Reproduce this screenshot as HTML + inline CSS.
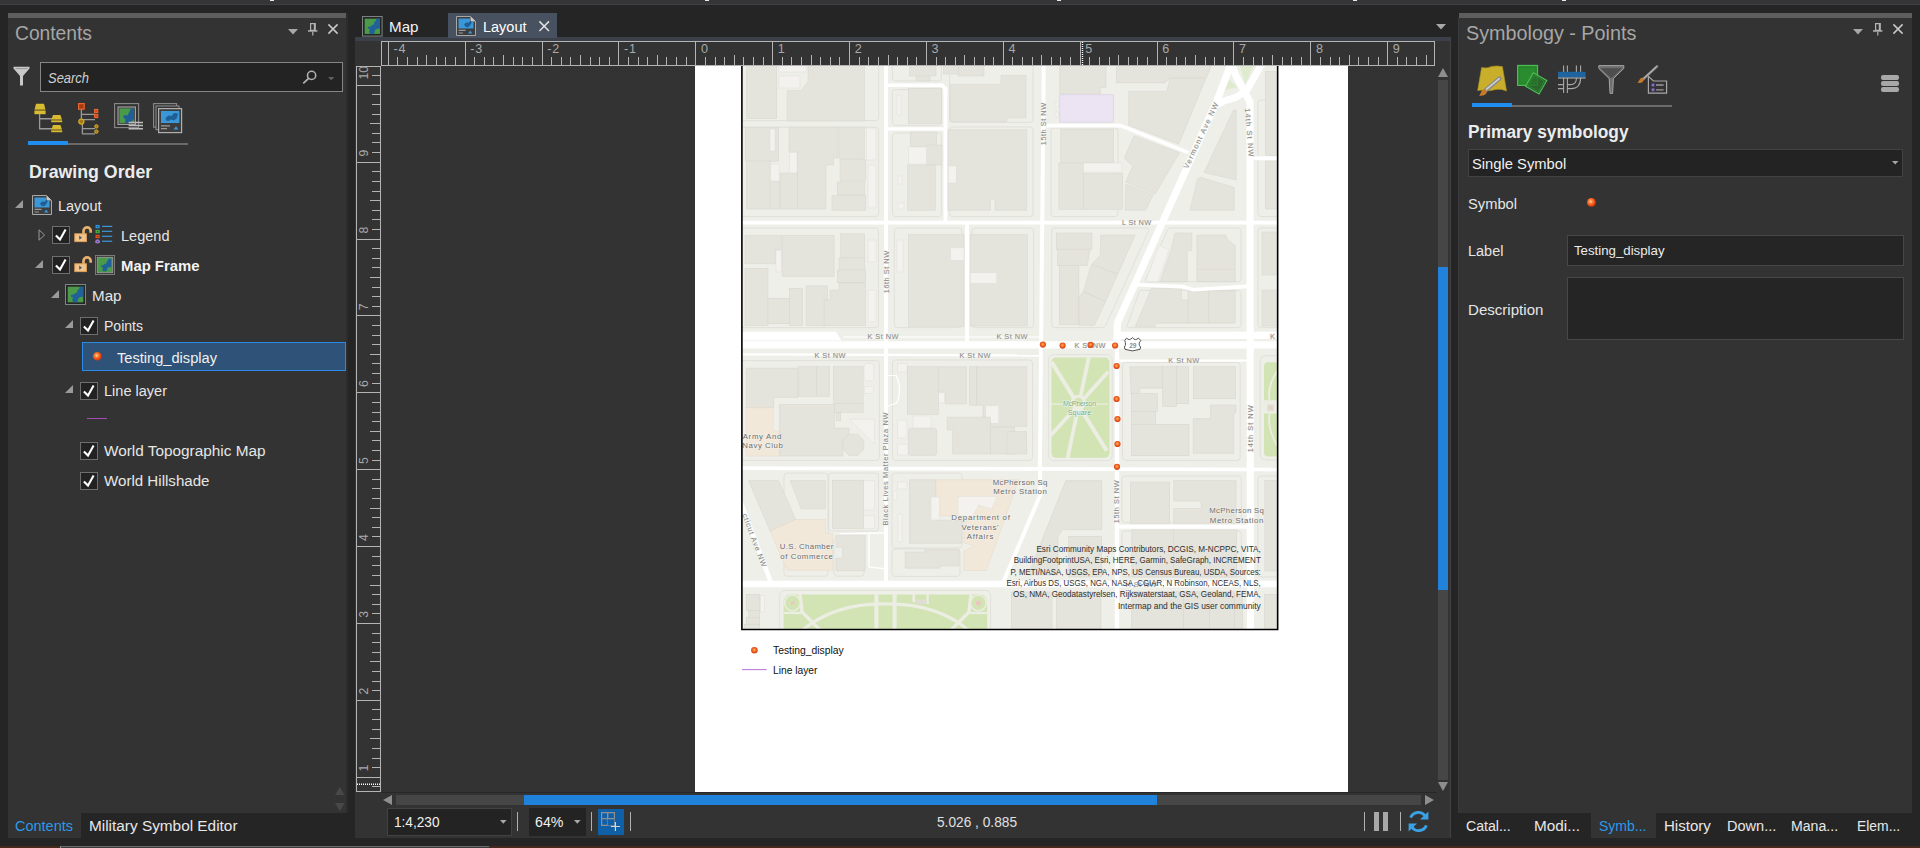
<!DOCTYPE html>
<html lang="en"><head><meta charset="utf-8"><title>ArcGIS Pro - Layout</title>
<style>
*{box-sizing:border-box;margin:0;padding:0}
html,body{width:1920px;height:848px;overflow:hidden;background:#252525}
body{position:relative;font-family:"Liberation Sans",sans-serif;color:#e4e4e4}
.a{position:absolute}
.t{position:absolute;white-space:nowrap;transform-origin:0 50%;line-height:normal}
svg{position:absolute;overflow:visible}
svg text{font-family:"Liberation Sans",sans-serif}
.cb{position:absolute;width:18px;height:18px;background:#222;border:1px solid #6e6e6e}

</style></head>
<body>

<!-- p_frame -->
<div class="a" style="left:0px;top:0px;width:1920px;height:4px;background:#353535;"></div>
<div class="a" style="left:0px;top:4px;width:1920px;height:1px;background:#3f3f45;"></div>
<div class="a" style="left:270px;top:0px;width:3.6px;height:1.2px;background:#e8e8e8;"></div>
<div class="a" style="left:705px;top:0px;width:3.6px;height:1.2px;background:#e8e8e8;"></div>
<div class="a" style="left:1057px;top:0px;width:3.6px;height:1.2px;background:#e8e8e8;"></div>
<div class="a" style="left:1353px;top:0px;width:3.6px;height:1.2px;background:#e8e8e8;"></div>
<div class="a" style="left:1562px;top:0px;width:3.6px;height:1.2px;background:#e8e8e8;"></div>
<div class="a" style="left:0px;top:846px;width:1920px;height:2px;background:#45291f;"></div>
<div class="a" style="left:60px;top:846px;width:429px;height:1px;background:#6a6a6a;"></div>
<div class="a" style="left:60px;top:847px;width:429px;height:1px;background:#3c3c3c;"></div>
<div class="a" style="left:60px;top:846px;width:1px;height:2px;background:#8a8a8a;"></div>
<div class="a" style="left:8px;top:13px;width:338px;height:800px;background:#333;"></div>
<div class="a" style="left:8px;top:13px;width:338px;height:5px;background:#5d5d5d;"></div>
<div class="a" style="left:346px;top:13px;width:2px;height:800px;background:#2c2c2c;"></div>
<div class="a" style="left:8px;top:813px;width:73px;height:25px;background:#333;"></div>
<div class="a" style="left:355px;top:37px;width:1096px;height:801px;background:#333;"></div>
<div class="a" style="left:355px;top:37px;width:1096px;height:4px;background:#3c4048;"></div>
<div class="a" style="left:1450px;top:41px;width:1px;height:797px;background:#414146;"></div>
<div class="a" style="left:1458px;top:18px;width:1px;height:795px;background:#3a3a3e;"></div>
<div class="a" style="left:448px;top:13px;width:109px;height:25px;background:#48515f;"></div>
<div class="a" style="left:1459px;top:13px;width:453px;height:800px;background:#333;"></div>
<div class="a" style="left:1459px;top:13px;width:453px;height:5px;background:#5d5d5d;"></div>
<div class="a" style="left:1591px;top:813px;width:65px;height:25px;background:#333;"></div>
<!-- p_left -->
<span class="t" style="left:14.50px;top:22.00px;font-size:20.4px;color:#a6a6a6;transform:scaleX(0.9430);">Contents</span>
<svg style="left:288px;top:29px" width="10" height="5.4" viewBox="0 0 10 5.4"><path d="M0 0H10L5.0 5.4Z" fill="#a8a8a8"/></svg>
<svg style="left:308px;top:22.6px" width="10" height="13" viewBox="0 0 10 13"><path d="M2.6 0.6H7.2V7.4H2.6Z" fill="none" stroke="#b4b4b4" stroke-width="1.2"/><path d="M5.8 0.6H7.2V7.4H5.8Z" fill="#b4b4b4"/><path d="M0 7.2H9.4V8.7H0Z" fill="#b4b4b4"/><path d="M4.2 8.7H5.4V12.6H4.2Z" fill="#b4b4b4"/></svg>
<svg style="left:328px;top:24px" width="10" height="10" viewBox="0 0 10 10"><path d="M0.4 0.4L9.6 9.6M9.6 0.4L0.4 9.6" stroke="#c8c8c8" stroke-width="1.5" fill="none"/></svg>
<svg style="left:13px;top:66px" width="17" height="21" viewBox="0 0 17 21"><path d="M0.5 0.8H16.5V2.6L10 10V19.5H7V10L0.5 2.6Z" fill="#c9c9c9"/><path d="M2.5 2.6H14.5" stroke="#8a8a8a" stroke-width="0.8"/></svg>
<div class="a" style="left:40px;top:62px;width:303px;height:30px;background:#232323;border:1px solid #868686;"></div>
<span class="t" style="left:47.50px;top:69.50px;font-size:14.6px;color:#d0d0d0;font-style:italic;transform:scaleX(0.8863);">Search</span>
<svg style="left:303px;top:70px" width="14" height="14" viewBox="0 0 14 14"><circle cx="8.6" cy="5.4" r="4.1" fill="none" stroke="#b0b0b0" stroke-width="1.6"/><path d="M5.6 8.4L0.8 12.8" stroke="#b0b0b0" stroke-width="1.8" stroke-linecap="round"/></svg>
<svg style="left:328px;top:77px" width="6.4" height="3.6" viewBox="0 0 6.4 3.6"><path d="M0 0H6.4L3.2 3.6Z" fill="#5e5e5e"/></svg>
<svg style="left:34px;top:103px" width="29" height="30" viewBox="0 0 29 30"><path d="M5.6 10V25.75H18M5.6 15.75H18" fill="none" stroke="#9a9a9a" stroke-width="1.3"/><path d="M2 0.8H10L11.4 6.4H0.6Z" fill="#d8bb30"/><path d="M0.4 7.6H11.6V11.2H0.4Z" fill="#d8bb30"/><path d="M0.6 6.9H11.4" stroke="#b89a18" stroke-width="0.9"/><path d="M19 12H26.4L28 16.6H17.4Z" fill="#d8bb30"/><path d="M17.2 17.4H28.2V19.2H17.2Z" fill="#d8bb30"/><path d="M17.4 17H28" stroke="#b89a18" stroke-width="0.8"/><path d="M19 22H26.4L28 26.6H17.4Z" fill="#d8bb30"/><path d="M17.2 27.4H28.2V29.2H17.2Z" fill="#d8bb30"/><path d="M17.4 27H28" stroke="#b89a18" stroke-width="0.8"/></svg>
<svg style="left:78px;top:103px" width="21" height="31" viewBox="0 0 21 31"><path d="M3.4 6V19M3.4 12H17M3.4 17.4H17M4.4 21V33M4.4 27H17M4.4 32.6H17" transform="scale(1,0.95)" fill="none" stroke="#9a9a9a" stroke-width="1.3"/><rect x="0.6" y="0.6" width="5.6" height="5.6" fill="#a83a10" stroke="#f06a30" stroke-width="1.1"/><rect x="16.6" y="6.4" width="3.2" height="3.2" fill="#d84a18" stroke="#f06a30" stroke-width="1"/><rect x="16.6" y="11.4" width="3.2" height="3.2" fill="#d84a18" stroke="#f06a30" stroke-width="1"/><circle cx="3.4" cy="18.6" r="2.6" fill="#a87818" stroke="#d8b020" stroke-width="1.1"/><circle cx="18.4" cy="23.4" r="1.7" fill="#a87818" stroke="#d8b020" stroke-width="1"/><circle cx="18.4" cy="28.6" r="1.7" fill="#a87818" stroke="#d8b020" stroke-width="1"/></svg>
<svg style="left:114px;top:103px" width="30" height="29" viewBox="0 0 30 29"><rect x="0.6" y="0.6" width="24" height="24" fill="none" stroke="#8a8a8a" stroke-width="1.1"/><rect x="4" y="4" width="17.4" height="17.4" fill="#3d3d3d" stroke="#a8a8a8" stroke-width="1.1"/><rect x="5.4" y="5.4" width="14.6" height="14.6" fill="#4a9a4a"/><path d="M17 5.4H20V16L16 20H11L11.5 16.5L9 14L10.5 12L13.5 12.5L15 9.5Z" fill="#1f5f96"/><path d="M14.6 19.4H29M14.6 22.6H29M14.6 25.8H29" stroke="#bdbdbd" stroke-width="1.5"/><path d="M14.6 18H29V27H14.6Z" fill="#333" opacity="0"/></svg>
<svg style="left:153px;top:103px" width="30" height="31" viewBox="0 0 30 31"><rect x="0.6" y="0.6" width="23" height="23.6" fill="#333" stroke="#8a8a8a" stroke-width="1.1"/><rect x="3" y="3" width="23" height="23.6" fill="#333" stroke="#8a8a8a" stroke-width="1.1"/><rect x="5.6" y="5.6" width="23" height="24" fill="#3d3d3d" stroke="#b0b0b0" stroke-width="1.2"/><rect x="8" y="8" width="18.4" height="12" fill="#3a98d8"/><path d="M12.5 15L15.5 12.5L18.5 13L21 10L25 10.5L24 15L21 17.4L18 16.4L15.5 18L13 17.4Z" fill="#1f5f96"/><path d="M8 22.8H17M8 25.6H14" stroke="#9a9a9a" stroke-width="1.2"/><path d="M20.6 26.6L23 23.2L25.4 26.6Z" fill="#3a98d8"/></svg>
<div class="a" style="left:28px;top:141px;width:40px;height:4px;background:#1f8ef0;"></div>
<div class="a" style="left:68px;top:143px;width:120px;height:2px;background:#6a6a6a;"></div>
<span class="t" style="left:28.80px;top:161.80px;font-size:17.9px;color:#ececec;font-weight:bold;transform:scaleX(0.9909);">Drawing Order</span>
<svg style="left:15px;top:200px" width="8" height="8" viewBox="0 0 8 8"><path d="M8 0V8H0Z" fill="#9a9a9a"/></svg>
<svg style="left:32px;top:195px" width="20" height="20" viewBox="0 0 20 20"><path d="M0.5 0.5H14.5L19.5 5.5V19.5H0.5Z" fill="#3d3d3d" stroke="#a8a8a8" stroke-width="1"/><path d="M14.5 0.5V5.5H19.5Z" fill="#c8c8c8"/><path d="M2.5 2.5H14V6H17.5V12.5H2.5Z" fill="#3a98d8"/><path d="M8 8.5L10 6.5L12.5 6.8L14.5 4.5L15.8 6.5L14 9.5L12 11.2L9.5 10.8Z" fill="#1f5f96"/><path d="M2.6 14.3H9.6M2.6 17H7" stroke="#9a9a9a" stroke-width="1.2"/><path d="M12 17.6L14.2 14.6L16.4 17.6Z" fill="#3a98d8"/></svg>
<span class="t" style="left:58.40px;top:197.00px;font-size:15.5px;color:#e6e6e6;transform:scaleX(0.9347);">Layout</span>
<svg style="left:38px;top:229px" width="8" height="12" viewBox="0 0 8 12"><path d="M1 0.8L6.6 6L1 11.2Z" fill="none" stroke="#9a9a9a" stroke-width="1"/></svg>
<div class="cb" style="left:52px;top:226px"></div><svg style="left:52px;top:226px" width="18" height="18" viewBox="0 0 18 18"><path d="M3.9 9.5L8 13.6L13.6 3.6" fill="none" stroke="#fff" stroke-width="2.1" stroke-linejoin="miter"/></svg>
<svg style="left:74px;top:226px" width="19" height="17" viewBox="0 0 19 17"><path d="M9.5 8V5A3.6 3.6 0 0 1 16.7 5V6.7" fill="none" stroke="#e6ae6c" stroke-width="2.7"/><rect x="0.8" y="7.8" width="11.6" height="7.8" fill="#f0c48c" stroke="#dca058" stroke-width="1"/><path d="M5.2 9.6L8 11.7L5.2 13.8Z" fill="#50565e"/></svg>
<svg style="left:95px;top:225px" width="18" height="20" viewBox="0 0 18 20"><rect x="0.5" y="-0.10" width="4.2" height="3.4" fill="#2f8fd8"/><rect x="2" y="1.00" width="1.2" height="1.2" fill="#1c3a50" opacity="0.7"/><path d="M7 1.40H17.2" stroke="#3a98d8" stroke-width="1.2"/><rect x="0.5" y="4.85" width="4.2" height="3.4" fill="#48a848"/><rect x="2" y="5.95" width="1.2" height="1.2" fill="#1c3a50" opacity="0.7"/><path d="M7 6.35H17.2" stroke="#3a98d8" stroke-width="1.2"/><rect x="0.5" y="9.80" width="4.2" height="3.4" fill="#d8501c"/><rect x="2" y="10.90" width="1.2" height="1.2" fill="#1c3a50" opacity="0.7"/><path d="M7 11.30H17.2" stroke="#3a98d8" stroke-width="1.2"/><path d="M2.6 14.25Q5.4 14.85 5 17.85Q2.6 19.05 0.2 17.85Q-0.2 14.85 2.6 14.25Z" fill="#9a78d0"/><rect x="2" y="15.85" width="1.2" height="1.2" fill="#3a2860" opacity="0.7"/><path d="M7 16.25H17.2" stroke="#3a98d8" stroke-width="1.2"/></svg>
<span class="t" style="left:121.40px;top:227.00px;font-size:15.5px;color:#e6e6e6;transform:scaleX(0.9377);">Legend</span>
<svg style="left:35px;top:260px" width="8" height="8" viewBox="0 0 8 8"><path d="M8 0V8H0Z" fill="#9a9a9a"/></svg>
<div class="cb" style="left:52px;top:256px"></div><svg style="left:52px;top:256px" width="18" height="18" viewBox="0 0 18 18"><path d="M3.9 9.5L8 13.6L13.6 3.6" fill="none" stroke="#fff" stroke-width="2.1" stroke-linejoin="miter"/></svg>
<svg style="left:74px;top:256px" width="19" height="17" viewBox="0 0 19 17"><path d="M9.5 8V5A3.6 3.6 0 0 1 16.7 5V6.7" fill="none" stroke="#e6ae6c" stroke-width="2.7"/><rect x="0.8" y="7.8" width="11.6" height="7.8" fill="#f0c48c" stroke="#dca058" stroke-width="1"/><path d="M5.2 9.6L8 11.7L5.2 13.8Z" fill="#50565e"/></svg>
<svg style="left:95px;top:255px" width="20" height="20" viewBox="0 0 21 21"><rect x="0.5" y="0.5" width="20" height="20" fill="#2e2e2e" stroke="#7e7e7e" stroke-width="1"/><rect x="2.4" y="2.4" width="16.2" height="16.2" fill="#4a9a4a" stroke="#9a9a9a" stroke-width="1"/><path d="M14.7 2.7H18.3V13.1L16 12.8L13.5 14L12.2 18.3H8L7.2 15.4L8.3 13.8L6 12.8L5.8 11L9 10.6L10.4 9L12 8.8L12.6 6L14 5.2Z" fill="#1f6198" transform="translate(1.6,1.6) scale(0.85)"/></svg>
<span class="t" style="left:121.40px;top:257.00px;font-size:15.5px;color:#f4f4f4;font-weight:bold;transform:scaleX(0.9593);">Map Frame</span>
<svg style="left:51px;top:290px" width="8" height="8" viewBox="0 0 8 8"><path d="M8 0V8H0Z" fill="#9a9a9a"/></svg>
<svg style="left:65.2px;top:284.2px" width="21" height="21" viewBox="0 0 21 21"><rect x="0.5" y="0.5" width="20" height="20" fill="#262626" stroke="#7c8684" stroke-width="1"/><rect x="2.7" y="2.7" width="15.6" height="15.6" fill="#4a9a4a"/><path d="M14.7 2.7H18.3V13.1L16 12.8L13.5 14L12.2 18.3H8L7.2 15.4L8.3 13.8L6 12.8L5.8 11L9 10.6L10.4 9L12 8.8L12.6 6L14 5.2Z" fill="#1f6198"/></svg>
<span class="t" style="left:92.20px;top:287.00px;font-size:15.5px;color:#e6e6e6;transform:scaleX(0.9783);">Map</span>
<svg style="left:65px;top:320px" width="8" height="8" viewBox="0 0 8 8"><path d="M8 0V8H0Z" fill="#9a9a9a"/></svg>
<div class="cb" style="left:80px;top:317px"></div><svg style="left:80px;top:317px" width="18" height="18" viewBox="0 0 18 18"><path d="M3.9 9.5L8 13.6L13.6 3.6" fill="none" stroke="#fff" stroke-width="2.1" stroke-linejoin="miter"/></svg>
<span class="t" style="left:104.40px;top:317.00px;font-size:15.5px;color:#e6e6e6;transform:scaleX(0.9053);">Points</span>
<div class="a" style="left:82px;top:342px;width:264px;height:29px;background:#2f5278;border:1px solid #2b8ae6;"></div>
<svg style="left:91.9px;top:351.3px" width="10.6" height="10.6" viewBox="0 0 10.6 10.6"><defs><radialGradient id="dl" cx="0.42" cy="0.4" r="0.62"><stop offset="0" stop-color="#ffd9a8"/><stop offset="0.3" stop-color="#ff8a3a"/><stop offset="0.75" stop-color="#ea4510"/><stop offset="1" stop-color="#c83a10"/></radialGradient></defs><circle cx="5.3" cy="5.3" r="4.3" fill="url(#dl)"/></svg>
<span class="t" style="left:117.20px;top:349.00px;font-size:15.5px;color:#f0f0f0;transform:scaleX(0.9436);">Testing_display</span>
<svg style="left:65px;top:385px" width="8" height="8" viewBox="0 0 8 8"><path d="M8 0V8H0Z" fill="#9a9a9a"/></svg>
<div class="cb" style="left:80px;top:382px"></div><svg style="left:80px;top:382px" width="18" height="18" viewBox="0 0 18 18"><path d="M3.9 9.5L8 13.6L13.6 3.6" fill="none" stroke="#fff" stroke-width="2.1" stroke-linejoin="miter"/></svg>
<span class="t" style="left:104.40px;top:382.00px;font-size:15.5px;color:#e6e6e6;transform:scaleX(0.9374);">Line layer</span>
<div class="a" style="left:87px;top:417.5px;width:20px;height:1.6px;background:#a24cb4;"></div>
<div class="cb" style="left:80px;top:442px"></div><svg style="left:80px;top:442px" width="18" height="18" viewBox="0 0 18 18"><path d="M3.9 9.5L8 13.6L13.6 3.6" fill="none" stroke="#fff" stroke-width="2.1" stroke-linejoin="miter"/></svg>
<span class="t" style="left:104.40px;top:442.00px;font-size:15.5px;color:#e6e6e6;transform:scaleX(0.9900);">World Topographic Map</span>
<div class="cb" style="left:80px;top:472px"></div><svg style="left:80px;top:472px" width="18" height="18" viewBox="0 0 18 18"><path d="M3.9 9.5L8 13.6L13.6 3.6" fill="none" stroke="#fff" stroke-width="2.1" stroke-linejoin="miter"/></svg>
<span class="t" style="left:104.40px;top:472.00px;font-size:15.5px;color:#e6e6e6;transform:scaleX(0.9745);">World Hillshade</span>
<svg style="left:335px;top:787px" width="9.6" height="8" viewBox="0 0 9.6 8"><path d="M4.8 0L9.6 8H0Z" fill="#484848"/></svg>
<svg style="left:335px;top:803px" width="9.6" height="8" viewBox="0 0 9.6 8"><path d="M0 0H9.6L4.8 8Z" fill="#484848"/></svg>
<span class="t" style="left:14.60px;top:817.00px;font-size:15.5px;color:#2b9ae8;transform:scaleX(0.9349);">Contents</span>
<span class="t" style="left:89.00px;top:817.00px;font-size:15.5px;color:#e8e8e8;transform:scaleX(0.9908);">Military Symbol Editor</span>
<!-- p_center -->
<svg style="left:362px;top:16px" width="20.6" height="20.6" viewBox="0 0 21 21"><rect x="0.5" y="0.5" width="20" height="20" fill="#262626" stroke="#7c8684" stroke-width="1"/><rect x="2.7" y="2.7" width="15.6" height="15.6" fill="#4a9a4a"/><path d="M14.7 2.7H18.3V13.1L16 12.8L13.5 14L12.2 18.3H8L7.2 15.4L8.3 13.8L6 12.8L5.8 11L9 10.6L10.4 9L12 8.8L12.6 6L14 5.2Z" fill="#1f6198"/></svg>
<span class="t" style="left:389.00px;top:17.60px;font-size:15.5px;color:#f2f2f2;transform:scaleX(0.9783);">Map</span>
<svg style="left:456px;top:16px" width="20" height="20" viewBox="0 0 20 20"><path d="M0.5 0.5H14.5L19.5 5.5V19.5H0.5Z" fill="#3d3d3d" stroke="#a8a8a8" stroke-width="1"/><path d="M14.5 0.5V5.5H19.5Z" fill="#c8c8c8"/><path d="M2.5 2.5H14V6H17.5V12.5H2.5Z" fill="#3a98d8"/><path d="M8 8.5L10 6.5L12.5 6.8L14.5 4.5L15.8 6.5L14 9.5L12 11.2L9.5 10.8Z" fill="#1f5f96"/><path d="M2.6 14.3H9.6M2.6 17H7" stroke="#9a9a9a" stroke-width="1.2"/><path d="M12 17.6L14.2 14.6L16.4 17.6Z" fill="#3a98d8"/></svg>
<span class="t" style="left:482.60px;top:17.60px;font-size:15.5px;color:#ffffff;transform:scaleX(0.9347);">Layout</span>
<svg style="left:539px;top:21px" width="10.4" height="10.4" viewBox="0 0 10.4 10.4"><path d="M0.4 0.4L10.0 10.0M10.0 0.4L0.4 10.0" stroke="#e0e0e0" stroke-width="1.5" fill="none"/></svg>
<svg style="left:1436px;top:24px" width="10" height="5.6" viewBox="0 0 10 5.6"><path d="M0 0H10L5.0 5.6Z" fill="#a8a8a8"/></svg>
<svg style="left:0;top:0" width="1460" height="70"><rect x="381.5" y="41.5" width="1053" height="24" fill="#333" stroke="#b4b4b4" stroke-width="1"/><path d="M388.5 42V65M397.5 57V65M407.5 57V65M417.5 57V65M426.5 55V65M436.5 57V65M445.5 57V65M455.5 57V65M465.5 42V65M474.5 57V65M484.5 57V65M493.5 57V65M503.5 55V65M513.5 57V65M522.5 57V65M532.5 57V65M542.5 42V65M551.5 57V65M561.5 57V65M570.5 57V65M580.5 55V65M590.5 57V65M599.5 57V65M609.5 57V65M618.5 42V65M628.5 57V65M638.5 57V65M647.5 57V65M657.5 55V65M666.5 57V65M676.5 57V65M686.5 57V65M695.5 42V65M705.5 57V65M715.5 57V65M724.5 57V65M734.5 55V65M743.5 57V65M753.5 57V65M763.5 57V65M772.5 42V65M782.5 57V65M791.5 57V65M801.5 57V65M811.5 55V65M820.5 57V65M830.5 57V65M839.5 57V65M849.5 42V65M859.5 57V65M868.5 57V65M878.5 57V65M888.5 55V65M897.5 57V65M907.5 57V65M916.5 57V65M926.5 42V65M936.5 57V65M945.5 57V65M955.5 57V65M964.5 55V65M974.5 57V65M984.5 57V65M993.5 57V65M1003.5 42V65M1012.5 57V65M1022.5 57V65M1032.5 57V65M1041.5 55V65M1051.5 57V65M1060.5 57V65M1070.5 57V65M1080.5 42V65M1089.5 57V65M1099.5 57V65M1109.5 57V65M1118.5 55V65M1128.5 57V65M1137.5 57V65M1147.5 57V65M1157.5 42V65M1166.5 57V65M1176.5 57V65M1185.5 57V65M1195.5 55V65M1205.5 57V65M1214.5 57V65M1224.5 57V65M1233.5 42V65M1243.5 57V65M1253.5 57V65M1262.5 57V65M1272.5 55V65M1282.5 57V65M1291.5 57V65M1301.5 57V65M1310.5 42V65M1320.5 57V65M1330.5 57V65M1339.5 57V65M1349.5 55V65M1358.5 57V65M1368.5 57V65M1378.5 57V65M1387.5 42V65M1397.5 57V65M1406.5 57V65M1416.5 57V65M1426.5 55V65" stroke="#b4b4b4" stroke-width="1" fill="none"/><path d="M1082.5 42V65" stroke="#fff" stroke-width="1.4" stroke-dasharray="1 1"/><text x="393.38" y="53.30" font-size="12.6" fill="#a9a9a9" letter-spacing="0.9">-4</text><text x="470.26" y="53.30" font-size="12.6" fill="#a9a9a9" letter-spacing="0.9">-3</text><text x="547.14" y="53.30" font-size="12.6" fill="#a9a9a9" letter-spacing="0.9">-2</text><text x="624.02" y="53.30" font-size="12.6" fill="#a9a9a9" letter-spacing="0.9">-1</text><text x="700.90" y="53.30" font-size="12.6" fill="#a9a9a9">0</text><text x="777.78" y="53.30" font-size="12.6" fill="#a9a9a9">1</text><text x="854.66" y="53.30" font-size="12.6" fill="#a9a9a9">2</text><text x="931.54" y="53.30" font-size="12.6" fill="#a9a9a9">3</text><text x="1008.42" y="53.30" font-size="12.6" fill="#a9a9a9">4</text><text x="1085.30" y="53.30" font-size="12.6" fill="#a9a9a9">5</text><text x="1162.18" y="53.30" font-size="12.6" fill="#a9a9a9">6</text><text x="1239.06" y="53.30" font-size="12.6" fill="#a9a9a9">7</text><text x="1315.94" y="53.30" font-size="12.6" fill="#a9a9a9">8</text><text x="1392.82" y="53.30" font-size="12.6" fill="#a9a9a9">9</text></svg>
<svg style="left:0;top:0" width="400" height="800"><rect x="356.5" y="66.5" width="24" height="725" fill="#333" stroke="#b4b4b4" stroke-width="1"/><path d="M372 786.5H380M357 777.5H380M372 767.5H380M372 758.5H380M372 748.5H380M370 738.5H380M372 729.5H380M372 719.5H380M372 709.5H380M357 700.5H380M372 690.5H380M372 681.5H380M372 671.5H380M370 661.5H380M372 652.5H380M372 642.5H380M372 633.5H380M357 623.5H380M372 613.5H380M372 604.5H380M372 594.5H380M370 585.5H380M372 575.5H380M372 565.5H380M372 556.5H380M357 546.5H380M372 536.5H380M372 527.5H380M372 517.5H380M370 508.5H380M372 498.5H380M372 488.5H380M372 479.5H380M357 469.5H380M372 460.5H380M372 450.5H380M372 440.5H380M370 431.5H380M372 421.5H380M372 412.5H380M372 402.5H380M357 392.5H380M372 383.5H380M372 373.5H380M372 363.5H380M370 354.5H380M372 344.5H380M372 335.5H380M372 325.5H380M357 315.5H380M372 306.5H380M372 296.5H380M372 287.5H380M370 277.5H380M372 267.5H380M372 258.5H380M372 248.5H380M357 239.5H380M372 229.5H380M372 219.5H380M372 210.5H380M370 200.5H380M372 191.5H380M372 181.5H380M372 171.5H380M357 162.5H380M372 152.5H380M372 142.5H380M372 133.5H380M370 123.5H380M372 114.5H380M372 104.5H380M372 94.5H380M357 85.5H380M372 75.5H380" stroke="#b4b4b4" stroke-width="1" fill="none"/><path d="M357 784.3H380" stroke="#fff" stroke-width="1.4" stroke-dasharray="1 1"/><text transform="translate(367.6,771.5) rotate(-90)" font-size="12.2" fill="#a9a9a9">1</text><text transform="translate(367.6,694.6) rotate(-90)" font-size="12.2" fill="#a9a9a9">2</text><text transform="translate(367.6,617.8) rotate(-90)" font-size="12.2" fill="#a9a9a9">3</text><text transform="translate(367.6,540.9) rotate(-90)" font-size="12.2" fill="#a9a9a9">4</text><text transform="translate(367.6,464.0) rotate(-90)" font-size="12.2" fill="#a9a9a9">5</text><text transform="translate(367.6,387.1) rotate(-90)" font-size="12.2" fill="#a9a9a9">6</text><text transform="translate(367.6,310.2) rotate(-90)" font-size="12.2" fill="#a9a9a9">7</text><text transform="translate(367.6,233.4) rotate(-90)" font-size="12.2" fill="#a9a9a9">8</text><text transform="translate(367.6,156.5) rotate(-90)" font-size="12.2" fill="#a9a9a9">9</text><text transform="translate(367.6,79.6) rotate(-90)" font-size="12.2" fill="#a9a9a9">10</text></svg>
<svg style="left:1438px;top:68px" width="10" height="9" viewBox="0 0 10 9"><path d="M5 0L10 9H0Z" fill="#8e8e8e"/></svg>
<div class="a" style="left:1438px;top:80px;width:10px;height:700px;background:#464646;"></div>
<div class="a" style="left:1438px;top:267px;width:10px;height:323px;background:#2182dc;"></div>
<svg style="left:1438px;top:782px" width="10" height="9" viewBox="0 0 10 9"><path d="M0 0H10L5 9Z" fill="#8e8e8e"/></svg>
<div class="a" style="left:381px;top:792px;width:1056px;height:1.3px;background:#282828;"></div>
<svg style="left:383px;top:795px" width="9" height="10" viewBox="0 0 9 10"><path d="M9 0V10L0 5Z" fill="#8e8e8e"/></svg>
<div class="a" style="left:396px;top:795px;width:1025px;height:10px;background:#464646;"></div>
<div class="a" style="left:524px;top:795px;width:633px;height:10px;background:#2182dc;"></div>
<svg style="left:1425px;top:795px" width="9" height="10" viewBox="0 0 9 10"><path d="M0 0L9 5L0 10Z" fill="#8e8e8e"/></svg>
<div class="a" style="left:387px;top:808.2px;width:125px;height:27.4px;background:#232323;border:1px solid #414146;"></div>
<span class="t" style="left:393.60px;top:813.40px;font-size:15.5px;color:#f0f0f0;transform:scaleX(0.8798);">1:4,230</span>
<svg style="left:500px;top:820.4px" width="6.6" height="3.8" viewBox="0 0 6.6 3.8"><path d="M0 0H6.6L3.3 3.8Z" fill="#a8a8a8"/></svg>
<div class="a" style="left:517px;top:812px;width:1.4px;height:19px;background:#b0b0b0;"></div>
<div class="a" style="left:529px;top:808.4px;width:57px;height:27.2px;background:#232323;"></div>
<span class="t" style="left:535.00px;top:813.40px;font-size:15.5px;color:#f0f0f0;transform:scaleX(0.9154);">64%</span>
<svg style="left:574px;top:820.4px" width="6.6" height="3.8" viewBox="0 0 6.6 3.8"><path d="M0 0H6.6L3.3 3.8Z" fill="#a8a8a8"/></svg>
<div class="a" style="left:591px;top:812px;width:1.4px;height:19px;background:#b0b0b0;"></div>
<div class="a" style="left:598px;top:809px;width:26px;height:26px;background:#1060a8;"></div>
<svg style="left:601px;top:812px" width="20" height="20" viewBox="0 0 20 20"><path d="M0.6 0.6H13.4V13.4H0.6ZM0.6 6.6H13.4M6.6 0.6V13.4" fill="none" stroke="#8f8f8f" stroke-width="1.2"/><path d="M6.6 6.6H13.4V13.4H6.6Z" fill="#1060a8"/><path d="M6.6 0.6V6.6H13.4" fill="none" stroke="#8f8f8f" stroke-width="1.2"/><path d="M14.4 10V19M9.9 14.5H18.9" stroke="#d8d8d8" stroke-width="1.2"/></svg>
<div class="a" style="left:630px;top:812px;width:1.4px;height:19px;background:#b0b0b0;"></div>
<span class="t" style="left:936.80px;top:813.20px;font-size:15.5px;color:#e0e0e0;transform:scaleX(0.8840);">5.026 , 0.885</span>
<div class="a" style="left:1364px;top:812px;width:1.4px;height:19px;background:#b0b0b0;"></div>
<div class="a" style="left:1374px;top:812px;width:5.2px;height:18.6px;background:#a8a8a8;"></div>
<div class="a" style="left:1383px;top:812px;width:5.2px;height:18.6px;background:#a8a8a8;"></div>
<div class="a" style="left:1400px;top:812px;width:1.4px;height:19px;background:#b0b0b0;"></div>
<svg style="left:1407.6px;top:810.6px" width="21" height="21" viewBox="0 0 21 21"><path d="M2.6 6.6A8.4 8.4 0 0 1 17 4.6" fill="none" stroke="#3aa2e4" stroke-width="2.9"/><path d="M12 8.6H20.4V0.4Z" fill="#3aa2e4"/><path d="M18.4 14.4A8.4 8.4 0 0 1 4 16.4" fill="none" stroke="#3aa2e4" stroke-width="2.9"/><path d="M9 12.4H0.6V20.6Z" fill="#3aa2e4"/></svg>
<!-- p_map -->
<svg style="left:0;top:0" width="1920" height="848"><defs><clipPath id="cv"><rect x="381" y="66" width="1056" height="726"/></clipPath><clipPath id="cm"><rect x="741" y="60" width="537" height="570"/></clipPath></defs><g clip-path="url(#cv)"><rect x="695" y="40" width="653.0" height="840.0" fill="#ffffff"/><g clip-path="url(#cm)"><rect x="741" y="40" width="537.0" height="590.0" fill="#efefea"/><rect x="730" y="50" width="148.7" height="70.6" rx="3" fill="none" stroke="#dbdad2" stroke-width="0.7"/><rect x="730" y="127.2" width="148.7" height="89.4" rx="3" fill="none" stroke="#dbdad2" stroke-width="0.7"/><rect x="892.4" y="89.6" width="49.0" height="35.8" rx="3" fill="none" stroke="#dbdad2" stroke-width="0.7"/><rect x="892.4" y="133" width="49.0" height="83.6" rx="3" fill="none" stroke="#dbdad2" stroke-width="0.7"/><rect x="892.4" y="50" width="49.0" height="31.0" rx="3" fill="none" stroke="#dbdad2" stroke-width="0.7"/><rect x="949.6" y="50" width="83.4" height="72.4" rx="3" fill="none" stroke="#dbdad2" stroke-width="0.7"/><rect x="949.6" y="127" width="83.4" height="89.6" rx="3" fill="none" stroke="#dbdad2" stroke-width="0.7"/><rect x="730" y="228" width="148.5" height="99.6" rx="3" fill="none" stroke="#dbdad2" stroke-width="0.7"/><rect x="894.3" y="228" width="67.7" height="99.6" rx="3" fill="none" stroke="#dbdad2" stroke-width="0.7"/><rect x="972" y="228" width="61.6" height="99.6" rx="3" fill="none" stroke="#dbdad2" stroke-width="0.7"/><rect x="730" y="360.6" width="149.4" height="99.8" rx="3" fill="none" stroke="#dbdad2" stroke-width="0.7"/><rect x="892.4" y="360" width="140.1" height="100.4" rx="3" fill="none" stroke="#dbdad2" stroke-width="0.7"/><rect x="1122.5" y="362.4" width="117.7" height="98.0" rx="3" fill="none" stroke="#dbdad2" stroke-width="0.7"/><rect x="1122" y="476" width="119.3" height="46.6" rx="3" fill="none" stroke="#dbdad2" stroke-width="0.7"/><rect x="1122" y="531" width="119.3" height="46.0" rx="3" fill="none" stroke="#dbdad2" stroke-width="0.7"/><rect x="1258" y="476" width="32.0" height="101.0" rx="3" fill="none" stroke="#dbdad2" stroke-width="0.7"/><rect x="784" y="473.1" width="44.0" height="103.1" rx="3" fill="none" stroke="#dbdad2" stroke-width="0.7"/><rect x="828.6" y="473.1" width="49.9" height="57.9" rx="3" fill="none" stroke="#dbdad2" stroke-width="0.7"/><rect x="834" y="537" width="30.0" height="39.2" rx="3" fill="none" stroke="#dbdad2" stroke-width="0.7"/><rect x="891.9" y="473.1" width="70.1" height="74.9" rx="3" fill="none" stroke="#dbdad2" stroke-width="0.7"/><rect x="891.9" y="549" width="68.1" height="27.4" rx="3" fill="none" stroke="#dbdad2" stroke-width="0.7"/><rect x="1258" y="228" width="32.0" height="99.6" rx="3" fill="none" stroke="#dbdad2" stroke-width="0.7"/><rect x="1258" y="100" width="32.0" height="116.6" rx="3" fill="none" stroke="#dbdad2" stroke-width="0.7"/><rect x="1051" y="128" width="67.0" height="88.6" rx="3" fill="none" stroke="#dbdad2" stroke-width="0.7"/><path d="M1051.7 231Q1051.7 227.9 1054.7 227.9H1146Q1150 227.9 1148.4 231.4L1106 325Q1104.6 327.6 1101.6 327.6H1054.7Q1051.7 327.6 1051.7 324.6Z" fill="none" stroke="#dbdad2" stroke-width="0.7"/><path d="M1170.4 227.9H1238Q1241 227.9 1241 230.9V278.7Q1241 281.7 1238 281.7H1147.6Q1144.6 281.7 1146 278.8L1167.4 230.4Q1168.4 227.9 1170.4 227.9Z" fill="none" stroke="#dbdad2" stroke-width="0.7"/><path d="M1141 290.4H1238Q1241 290.4 1241 293.4V324.6Q1241 327.6 1238 327.6H1129.6Q1126 327.6 1127.4 324.6L1139 292.4Q1139.8 290.4 1141 290.4Z" fill="none" stroke="#dbdad2" stroke-width="0.7"/><rect x="746.6" y="60" width="30.2" height="58.7" fill="#e4e3dc" stroke="#d6d5cd" stroke-width="0.5"/><polygon points="808.0,60.0 864.5,60.0 864.5,121.0 787.2,121.0 787.2,90.4 801.0,90.4 808.0,82.0" fill="#e4e3dc" stroke="#d6d5cd" stroke-width="0.5"/><rect x="779" y="60" width="27.0" height="12.0" fill="#f3f2ee" stroke="#dddcd5" stroke-width="0.4"/><rect x="779" y="76" width="21.0" height="12.0" fill="#f3f2ee" stroke="#dddcd5" stroke-width="0.4"/><rect x="745.3" y="127.2" width="33.4" height="34.0" fill="#e4e3dc" stroke="#d6d5cd" stroke-width="0.5"/><rect x="746.6" y="161" width="23.6" height="48.0" fill="#e4e3dc" stroke="#d6d5cd" stroke-width="0.5"/><rect x="770" y="181" width="10.0" height="28.0" fill="#e4e3dc" stroke="#d6d5cd" stroke-width="0.5"/><rect x="780.2" y="173" width="17.0" height="36.0" fill="#e4e3dc" stroke="#d6d5cd" stroke-width="0.5"/><polygon points="789.0,127.0 838.0,127.0 838.0,158.0 833.5,158.0 833.5,165.0 826.0,165.0 826.0,209.0 797.5,209.0 797.5,152.0 789.0,152.0" fill="#e4e3dc" stroke="#d6d5cd" stroke-width="0.5"/><rect x="839" y="127" width="25.2" height="31.3" fill="#e4e3dc" stroke="#d6d5cd" stroke-width="0.5"/><rect x="840" y="159.3" width="25.5" height="21.7" fill="#e4e3dc" stroke="#d6d5cd" stroke-width="0.5"/><rect x="837.2" y="182" width="27.3" height="13.0" fill="#e4e3dc" stroke="#d6d5cd" stroke-width="0.5"/><rect x="832" y="195.7" width="33.8" height="14.5" fill="#e4e3dc" stroke="#d6d5cd" stroke-width="0.5"/><rect x="770" y="129" width="5.0" height="22.0" fill="#f3f2ee" stroke="#dddcd5" stroke-width="0.4"/><rect x="789.6" y="152.6" width="7.4" height="20.4" fill="#f3f2ee" stroke="#dddcd5" stroke-width="0.4"/><rect x="770.6" y="164" width="8.4" height="17.0" fill="#f3f2ee" stroke="#dddcd5" stroke-width="0.4"/><rect x="866.5" y="128" width="9.5" height="32.0" fill="#f3f2ee" stroke="#dddcd5" stroke-width="0.4"/><rect x="868" y="165" width="8.0" height="43.0" fill="#f3f2ee" stroke="#dddcd5" stroke-width="0.4"/><rect x="908.3" y="88.2" width="33.4" height="35.2" fill="#e4e3dc" stroke="#d6d5cd" stroke-width="0.5"/><rect x="909.6" y="60" width="26.4" height="16.0" fill="#e4e3dc" stroke="#d6d5cd" stroke-width="0.5"/><rect x="916" y="76" width="14.0" height="5.0" fill="#e4e3dc" stroke="#d6d5cd" stroke-width="0.5"/><rect x="910.5" y="132" width="26.1" height="15.0" fill="#e4e3dc" stroke="#d6d5cd" stroke-width="0.5"/><rect x="926.6" y="145" width="15.4" height="20.0" fill="#e4e3dc" stroke="#d6d5cd" stroke-width="0.5"/><rect x="908.6" y="147" width="18.0" height="17.0" fill="#f3f2ee" stroke="#dddcd5" stroke-width="0.4"/><rect x="907.7" y="165" width="27.7" height="45.2" fill="#e4e3dc" stroke="#d6d5cd" stroke-width="0.5"/><rect x="897" y="95" width="4.0" height="20.0" fill="#f3f2ee" stroke="#dddcd5" stroke-width="0.4"/><rect x="898" y="176" width="4.0" height="8.0" fill="#f3f2ee" stroke="#dddcd5" stroke-width="0.4"/><rect x="898" y="203" width="6.0" height="6.0" fill="#f3f2ee" stroke="#dddcd5" stroke-width="0.4"/><rect x="943.5" y="60" width="15.1" height="14.0" fill="#e4e3dc" stroke="#d6d5cd" stroke-width="0.5"/><rect x="958.6" y="60" width="25.4" height="16.0" fill="#e4e3dc" stroke="#d6d5cd" stroke-width="0.5"/><polygon points="950.2,84.4 1001.0,84.4 1001.0,75.3 1026.0,75.3 1026.0,117.8 1006.8,117.8 1006.8,121.5 950.2,121.5" fill="#e4e3dc" stroke="#d6d5cd" stroke-width="0.5"/><polygon points="947.9,129.7 1026.6,129.7 1026.6,210.2 995.0,210.2 995.0,199.0 990.3,199.0 990.3,210.2 947.9,210.2" fill="#e4e3dc" stroke="#d6d5cd" stroke-width="0.5"/><rect x="948.3" y="166" width="7.9" height="17.0" fill="#f3f2ee" stroke="#dddcd5" stroke-width="0.4"/><polygon points="1059.8,60.0 1106.0,60.0 1106.0,87.6 1100.4,87.6 1100.4,93.8 1059.8,93.8" fill="#e4e3dc" stroke="#d6d5cd" stroke-width="0.5"/><polygon points="1116.4,60.0 1214.0,60.0 1206.0,78.2 1170.2,78.2 1164.5,82.9 1116.4,82.9" fill="#e4e3dc" stroke="#d6d5cd" stroke-width="0.5"/><rect x="1059.8" y="94.8" width="53.8" height="27.3" fill="#ece3f3" stroke="#d6cbe0" stroke-width="0.6"/><polygon points="1128.7,91.4 1166.8,91.4 1170.2,78.2 1206.0,78.2 1178.7,144.2 1128.7,125.3" fill="#e4e3dc" stroke="#d6d5cd" stroke-width="0.5"/><rect x="1060.8" y="129.1" width="52.8" height="33.9" fill="#e4e3dc" stroke="#d6d5cd" stroke-width="0.5"/><rect x="1058.9" y="163" width="24.5" height="46.3" fill="#e4e3dc" stroke="#d6d5cd" stroke-width="0.5"/><rect x="1083.4" y="173.4" width="39.1" height="35.9" fill="#e4e3dc" stroke="#d6d5cd" stroke-width="0.5"/><polygon points="1133.8,135.7 1179.6,152.7 1155.0,194.2 1125.8,182.0 1132.5,165.9 1124.3,158.3" fill="#e4e3dc" stroke="#d6d5cd" stroke-width="0.5"/><polygon points="1125.8,184.0 1153.2,195.0 1145.7,210.2 1125.0,210.2" fill="#e4e3dc" stroke="#d6d5cd" stroke-width="0.5"/><rect x="1055" y="102" width="3.6" height="5.0" fill="#f3f2ee" stroke="#dddcd5" stroke-width="0.4"/><rect x="1055" y="112" width="3.6" height="5.0" fill="#f3f2ee" stroke="#dddcd5" stroke-width="0.4"/><rect x="1083.5" y="163" width="38.5" height="9.0" fill="#f3f2ee" stroke="#dddcd5" stroke-width="0.4"/><polygon points="1233.4,110.2 1236.2,110.2 1236.2,180.0 1204.0,172.5" fill="#e4e3dc" stroke="#d6d5cd" stroke-width="0.5"/><polygon points="1200.4,177.2 1234.3,187.6 1234.3,210.2 1190.0,210.2 1197.5,179.0" fill="#e4e3dc" stroke="#d6d5cd" stroke-width="0.5"/><rect x="1265.5" y="71.5" width="14.5" height="84.0" fill="#e4e3dc" stroke="#d6d5cd" stroke-width="0.5"/><rect x="1265.5" y="161" width="14.5" height="48.0" fill="#e4e3dc" stroke="#d6d5cd" stroke-width="0.5"/><polygon points="745.0,235.5 781.3,235.5 781.3,249.5 775.5,249.5 775.5,263.6 745.0,263.6" fill="#e4e3dc" stroke="#d6d5cd" stroke-width="0.5"/><rect x="782.1" y="235.5" width="52.0" height="40.8" fill="#e4e3dc" stroke="#d6d5cd" stroke-width="0.5"/><rect x="745" y="268.5" width="23.0" height="57.0" fill="#e4e3dc" stroke="#d6d5cd" stroke-width="0.5"/><rect x="768" y="298.2" width="21.5" height="25.6" fill="#e4e3dc" stroke="#d6d5cd" stroke-width="0.5"/><rect x="789.5" y="288.3" width="13.2" height="37.2" fill="#e4e3dc" stroke="#d6d5cd" stroke-width="0.5"/><rect x="806" y="285.9" width="21.5" height="39.6" fill="#e4e3dc" stroke="#d6d5cd" stroke-width="0.5"/><rect x="840.7" y="233.9" width="24.0" height="24.1" fill="#e4e3dc" stroke="#d6d5cd" stroke-width="0.5"/><rect x="839" y="258" width="25.7" height="12.0" fill="#e4e3dc" stroke="#d6d5cd" stroke-width="0.5"/><rect x="837.4" y="270" width="28.1" height="12.6" fill="#e4e3dc" stroke="#d6d5cd" stroke-width="0.5"/><polygon points="839.0,282.6 865.5,282.6 865.5,325.5 824.2,325.5 824.2,300.0 830.0,300.0 830.0,290.0 839.0,290.0" fill="#e4e3dc" stroke="#d6d5cd" stroke-width="0.5"/><rect x="776" y="250.4" width="5.0" height="21.6" fill="#f3f2ee" stroke="#dddcd5" stroke-width="0.4"/><rect x="868" y="240" width="8.0" height="22.0" fill="#f3f2ee" stroke="#dddcd5" stroke-width="0.4"/><rect x="868" y="290" width="8.0" height="32.0" fill="#f3f2ee" stroke="#dddcd5" stroke-width="0.4"/><rect x="908.4" y="234.7" width="55.6" height="91.6" fill="#e4e3dc" stroke="#d6d5cd" stroke-width="0.5"/><rect x="950.5" y="247.9" width="13.5" height="12.4" fill="#f3f2ee" stroke="#dddcd5" stroke-width="0.4"/><rect x="897" y="240" width="6.0" height="32.0" fill="#f3f2ee" stroke="#dddcd5" stroke-width="0.4"/><rect x="970.3" y="234.7" width="57.0" height="91.3" fill="#e4e3dc" stroke="#d6d5cd" stroke-width="0.5"/><rect x="970.3" y="272.7" width="26.5" height="10.7" fill="#f3f2ee" stroke="#dddcd5" stroke-width="0.4"/><rect x="1056.2" y="233" width="35.7" height="16.3" fill="#e4e3dc" stroke="#d6d5cd" stroke-width="0.5"/><polygon points="1057.5,249.3 1090.0,249.3 1087.3,265.5 1057.5,265.5" fill="#e4e3dc" stroke="#d6d5cd" stroke-width="0.5"/><rect x="1059.2" y="265.5" width="19.7" height="59.0" fill="#e4e3dc" stroke="#d6d5cd" stroke-width="0.5"/><polygon points="1100.7,235.0 1135.3,235.0 1117.8,273.9 1091.9,264.2 1100.3,255.1" fill="#e4e3dc" stroke="#d6d5cd" stroke-width="0.5"/><polygon points="1091.2,264.9 1117.8,273.9 1105.5,301.8 1083.5,291.4" fill="#e4e3dc" stroke="#d6d5cd" stroke-width="0.5"/><polygon points="1083.5,291.4 1105.5,301.8 1094.5,325.2 1078.9,325.2 1078.9,296.6" fill="#e4e3dc" stroke="#d6d5cd" stroke-width="0.5"/><polygon points="1174.9,233.0 1191.8,233.0 1191.8,250.6 1187.2,250.6 1187.2,281.7 1160.0,281.7 1171.0,250.0" fill="#e4e3dc" stroke="#d6d5cd" stroke-width="0.5"/><polygon points="1159.3,245.4 1169.0,250.0 1158.0,281.7 1145.4,281.7" fill="#f3f2ee" stroke="#dddcd5" stroke-width="0.4"/><polygon points="1196.9,235.0 1225.5,235.0 1228.0,240.0 1235.2,245.4 1235.2,281.7 1196.9,281.7" fill="#e4e3dc" stroke="#d6d5cd" stroke-width="0.5"/><path d="M1196.9 269.4H1235.2" stroke="#d6d5cd" stroke-width="0.5"/><polygon points="1151.5,288.2 1181.4,288.9 1181.4,299.9 1187.9,299.9 1187.9,290.8 1235.2,290.8 1235.2,323.2 1155.4,323.2 1155.4,326.5 1135.3,326.5" fill="#e4e3dc" stroke="#d6d5cd" stroke-width="0.5"/><path d="M1187.9 299.9V323.2M1208.6 290.8V323.2" stroke="#d6d5cd" stroke-width="0.5"/><rect x="1262" y="232" width="16.0" height="43.0" fill="#e4e3dc" stroke="#d6d5cd" stroke-width="0.5"/><rect x="1262" y="290" width="16.0" height="36.0" fill="#e4e3dc" stroke="#d6d5cd" stroke-width="0.5"/><polygon points="746.4,368.1 797.7,368.1 797.7,397.4 773.7,397.4 773.7,407.7 746.4,407.7" fill="#e4e3dc" stroke="#d6d5cd" stroke-width="0.5"/><rect x="798.3" y="366.7" width="18.1" height="29.7" fill="#e4e3dc" stroke="#d6d5cd" stroke-width="0.5"/><rect x="816.4" y="366.7" width="13.0" height="29.7" fill="#e4e3dc" stroke="#d6d5cd" stroke-width="0.5"/><rect x="833.4" y="366.7" width="29.7" height="36.8" fill="#e4e3dc" stroke="#d6d5cd" stroke-width="0.5"/><rect x="834.5" y="403.5" width="28.6" height="8.8" fill="#e4e3dc" stroke="#d6d5cd" stroke-width="0.5"/><rect x="836.2" y="412.3" width="4.6" height="8.5" fill="#e4e3dc" stroke="#d6d5cd" stroke-width="0.5"/><polygon points="746.4,407.7 773.3,407.7 773.3,431.0 779.3,431.0 779.3,456.1 746.4,456.1" fill="#f2e8da" stroke="#e4d8c6" stroke-width="0.5"/><polygon points="779.6,404.5 834.5,404.5 834.5,428.1 849.0,428.1 849.0,434.0 843.0,440.0 843.0,456.0 779.6,456.0" fill="#e4e3dc" stroke="#d6d5cd" stroke-width="0.5"/><polygon points="843.0,440.4 849.2,434.2 857.8,434.2 863.8,440.4 863.8,449.4 857.8,455.4 849.2,455.4 843.0,449.4" fill="#e4e3dc" stroke="#d6d5cd" stroke-width="0.5"/><polygon points="849.7,419.3 874.4,419.3 874.4,444.1" fill="#f3f2ee" stroke="#dddcd5" stroke-width="0.4"/><rect x="864.2" y="363.4" width="9.5" height="17.7" rx="2.5" fill="#f3f2ee" stroke="#dddcd5" stroke-width="0.4"/><rect x="864.2" y="386.5" width="9.5" height="6.7" fill="#f3f2ee" stroke="#dddcd5" stroke-width="0.4"/><rect x="907.2" y="366.7" width="31.2" height="47.7" fill="#e4e3dc" stroke="#d6d5cd" stroke-width="0.5"/><polygon points="938.4,366.7 966.4,366.7 966.4,404.0 945.1,404.0 945.1,392.2 938.4,392.2" fill="#e4e3dc" stroke="#d6d5cd" stroke-width="0.5"/><rect x="969.5" y="366.7" width="7.1" height="38.5" fill="#e4e3dc" stroke="#d6d5cd" stroke-width="0.5"/><polygon points="976.6,366.7 1026.8,366.7 1026.8,426.4 990.4,426.4 990.4,416.5 982.9,416.5 982.9,405.2 976.6,405.2" fill="#e4e3dc" stroke="#d6d5cd" stroke-width="0.5"/><rect x="985.8" y="405.9" width="13.0" height="17.3" fill="#f3f2ee" stroke="#dddcd5" stroke-width="0.4"/><rect x="938.6" y="392.6" width="6.0" height="10.4" fill="#f3f2ee" stroke="#dddcd5" stroke-width="0.4"/><polygon points="947.1,417.2 990.4,417.2 990.4,454.0 952.5,454.0 952.5,430.0 947.1,430.0" fill="#e4e3dc" stroke="#d6d5cd" stroke-width="0.5"/><rect x="990.4" y="427.1" width="24.4" height="26.9" fill="#e4e3dc" stroke="#d6d5cd" stroke-width="0.5"/><rect x="1007" y="431.8" width="19.8" height="22.2" fill="#e4e3dc" stroke="#d6d5cd" stroke-width="0.5"/><rect x="908.4" y="428.3" width="28.3" height="27.1" rx="2.5" fill="#e4e3dc" stroke="#d6d5cd" stroke-width="0.5"/><rect x="897.3" y="363.4" width="9.7" height="8.6" fill="#f3f2ee" stroke="#dddcd5" stroke-width="0.4"/><rect x="897.6" y="420" width="9.4" height="18.0" fill="#f3f2ee" stroke="#dddcd5" stroke-width="0.4"/><rect x="897.6" y="444" width="10.4" height="11.0" fill="#f3f2ee" stroke="#dddcd5" stroke-width="0.4"/><rect x="913" y="416" width="18.0" height="12.0" fill="#f3f2ee" stroke="#dddcd5" stroke-width="0.4"/><path d="M888 375.5H896.2Q900.2 384 899.4 392.5Q899 399 896.6 403L888 406" fill="none" stroke="#fff" stroke-width="1.2"/><polygon points="1129.8,366.7 1162.4,366.7 1162.4,388.2 1139.7,388.2 1139.7,395.3 1131.2,395.3" fill="#e4e3dc" stroke="#d6d5cd" stroke-width="0.5"/><rect x="1162.6" y="366.7" width="13.9" height="39.9" fill="#e4e3dc" stroke="#d6d5cd" stroke-width="0.5"/><rect x="1176.5" y="366.7" width="12.0" height="37.1" fill="#e4e3dc" stroke="#d6d5cd" stroke-width="0.5"/><rect x="1193.5" y="366.7" width="42.2" height="32.1" fill="#e4e3dc" stroke="#d6d5cd" stroke-width="0.5"/><rect x="1131.5" y="393.6" width="25.9" height="18.0" fill="#e4e3dc" stroke="#d6d5cd" stroke-width="0.5"/><rect x="1131.5" y="411.6" width="24.1" height="12.7" fill="#e4e3dc" stroke="#d6d5cd" stroke-width="0.5"/><rect x="1131.5" y="424.3" width="57.5" height="31.5" fill="#e4e3dc" stroke="#d6d5cd" stroke-width="0.5"/><polygon points="1193.2,418.6 1210.5,418.6 1210.5,404.9 1236.0,404.9 1236.0,413.0 1233.8,413.0 1233.8,453.3 1193.2,453.3" fill="#e4e3dc" stroke="#d6d5cd" stroke-width="0.5"/><polygon points="748.5,480.5 778.6,480.5 795.7,519.5 770.2,531.3" fill="#e4e3dc" stroke="#d6d5cd" stroke-width="0.5"/><polygon points="790.1,480.5 825.5,480.5 825.5,508.8 801.1,508.8" fill="#e4e3dc" stroke="#d6d5cd" stroke-width="0.5"/><rect x="832.5" y="480.2" width="31.3" height="48.2" fill="#e4e3dc" stroke="#d6d5cd" stroke-width="0.5"/><rect x="863.8" y="480.4" width="10.6" height="29.6" fill="#f3f2ee" stroke="#dddcd5" stroke-width="0.4"/><rect x="863.8" y="515.8" width="10.6" height="12.6" fill="#f3f2ee" stroke="#dddcd5" stroke-width="0.4"/><polygon points="770.2,531.3 795.7,519.5 825.5,519.5 825.5,533.2 832.5,533.2 832.5,570.3 787.1,570.3" fill="#f2e8da" stroke="#e4d8c6" stroke-width="0.5"/><polygon points="836.0,535.4 865.2,535.4 865.2,570.8 836.0,570.8 836.0,558.0 842.6,558.0 842.6,547.4 836.0,547.4" fill="#e4e3dc" stroke="#d6d5cd" stroke-width="0.5"/><polygon points="909.6,479.7 935.9,479.7 935.9,520.3 962.0,520.3 962.0,543.2 909.6,543.2" fill="#e4e3dc" stroke="#d6d5cd" stroke-width="0.5"/><polygon points="936.1,479.7 1018.7,479.7 986.3,570.5 963.9,570.5 963.9,551.3 974.5,545.8 963.9,542.9 963.9,520.3 958.0,515.9 939.8,515.9 939.8,496.0 936.1,496.0" fill="#f2e8da" stroke="#e4d8c6" stroke-width="0.5"/><polygon points="958.0,496.4 997.4,496.4 991.5,509.2 978.6,505.1 973.0,515.9 958.0,515.9" fill="#f3f2ee" stroke="#dddcd5" stroke-width="0.4"/><rect x="931" y="497" width="8.6" height="23.0" fill="#f3f2ee" stroke="#dddcd5" stroke-width="0.4"/><polygon points="905.2,552.0 925.0,552.0 925.0,549.8 959.0,549.8 959.0,566.0 940.0,566.0 940.0,568.2 905.2,568.2" fill="#e4e3dc" stroke="#d6d5cd" stroke-width="0.5"/><rect x="897.6" y="482" width="9.4" height="7.0" fill="#f3f2ee" stroke="#dddcd5" stroke-width="0.4"/><rect x="893" y="491" width="4.0" height="9.0" fill="#f3f2ee" stroke="#dddcd5" stroke-width="0.4"/><rect x="898" y="514" width="4.0" height="28.0" fill="#f3f2ee" stroke="#dddcd5" stroke-width="0.4"/><polygon points="1065.8,480.6 1101.7,480.6 1101.7,529.6 1063.0,529.6 1058.0,536.0 1058.0,575.0 1028.0,575.0" fill="#e4e3dc" stroke="#d6d5cd" stroke-width="0.5"/><rect x="1068.7" y="536.2" width="33.0" height="40.8" fill="#e4e3dc" stroke="#d6d5cd" stroke-width="0.5"/><rect x="1130.4" y="482" width="39.3" height="41.3" fill="#e4e3dc" stroke="#d6d5cd" stroke-width="0.5"/><polygon points="1173.7,480.5 1236.1,480.5 1236.1,523.3 1173.7,523.3 1173.7,508.5 1201.2,508.5 1201.2,501.1 1173.7,501.1" fill="#e4e3dc" stroke="#d6d5cd" stroke-width="0.5"/><rect x="1131.8" y="529.9" width="41.6" height="47.1" fill="#e4e3dc" stroke="#d6d5cd" stroke-width="0.5"/><rect x="1173.4" y="529.9" width="63.4" height="47.1" fill="#e4e3dc" stroke="#d6d5cd" stroke-width="0.5"/><rect x="1264.9" y="480.5" width="15.1" height="90.5" fill="#e4e3dc" stroke="#d6d5cd" stroke-width="0.5"/><rect x="746.2" y="594.4" width="13.6" height="15.9" fill="#e4e3dc" stroke="#d6d5cd" stroke-width="0.5"/><rect x="748.6" y="610.3" width="11.2" height="7.1" fill="#e4e3dc" stroke="#d6d5cd" stroke-width="0.5"/><rect x="746.2" y="617.4" width="13.6" height="6.8" fill="#e4e3dc" stroke="#d6d5cd" stroke-width="0.5"/><rect x="744.5" y="624.2" width="15.3" height="7.8" fill="#e4e3dc" stroke="#d6d5cd" stroke-width="0.5"/><rect x="760.7" y="595.6" width="3.5" height="16.5" fill="#f3f2ee" stroke="#dddcd5" stroke-width="0.4"/><rect x="1011.4" y="592" width="40.6" height="37.0" fill="#e4e3dc" stroke="#d6d5cd" stroke-width="0.5"/><rect x="1056.2" y="592" width="44.8" height="37.0" fill="#e4e3dc" stroke="#d6d5cd" stroke-width="0.5"/><rect x="1131.7" y="591.8" width="52.0" height="40.2" fill="#e4e3dc" stroke="#d6d5cd" stroke-width="0.5"/><rect x="1183.7" y="591.8" width="25.7" height="40.2" fill="#e4e3dc" stroke="#d6d5cd" stroke-width="0.5"/><rect x="1209.4" y="591.8" width="25.3" height="40.2" fill="#e4e3dc" stroke="#d6d5cd" stroke-width="0.5"/><rect x="1234.7" y="594" width="7.9" height="38.0" fill="#e4e3dc" stroke="#d6d5cd" stroke-width="0.5"/><rect x="1264.4" y="594.3" width="15.6" height="37.7" fill="#e4e3dc" stroke="#d6d5cd" stroke-width="0.5"/><rect x="1048.6" y="354.6" width="63.6" height="106" rx="5" fill="#efefea" stroke="#dddcd4" stroke-width="0.8"/><rect x="1051.4" y="357.4" width="58" height="100.4" rx="4.5" fill="#d3e4b4"/><polyline points="1051.5,361.9 1106.7,450.8" fill="none" stroke="#eceee4" stroke-width="4"/><polyline points="1089.0,356.5 1067.6,458.0" fill="none" stroke="#eceee4" stroke-width="3.7"/><polyline points="1108.2,371.8 1050.7,435.5" fill="none" stroke="#eceee4" stroke-width="3.7"/><polyline points="1051.0,404.2 1108.0,404.2" fill="none" stroke="#eceee4" stroke-width="1.2"/><circle cx="1078.3" cy="402.4" r="7.6" fill="#eceee4"/><circle cx="1078.3" cy="402.4" r="4.6" fill="#d3e4b4"/><rect x="1260.2" y="355.7" width="30" height="104.1" rx="5" fill="#efefea" stroke="#dddcd4" stroke-width="0.8"/><rect x="1264" y="362.3" width="30" height="94.2" rx="4" fill="#d3e4b4"/><rect x="1262" y="400.3" width="18.0" height="13.3" fill="#eceee4"/><path d="M1281 366Q1266.4 384 1269.6 400.6M1269.6 413.4Q1266.4 430 1281 452" fill="none" stroke="#eceee4" stroke-width="1.7"/><rect x="1267.3" y="404.5" width="6.6" height="6.5" fill="#e2dccf"/><rect x="1269.4" y="406.4" width="2.6" height="2.6" fill="#e8cfcb"/><polygon points="1227.7,78.4 1223.5,90.4 1237.6,86.9" fill="#dfebce"/><polygon points="1238.0,60.0 1256.0,60.0 1245.4,84.0" fill="#dfebce"/><rect x="779.6" y="590.4" width="211" height="60" rx="5" fill="#efefea" stroke="#dddcd4" stroke-width="0.8"/><rect x="783.6" y="594.6" width="203.6" height="50" rx="7" fill="#d3e4b4"/><path d="M798 634Q832 603 885.4 604Q939 603 973 634" fill="none" stroke="#eceee4" stroke-width="3.2"/><polyline points="876.4,594.0 876.4,630.0" fill="none" stroke="#eceee4" stroke-width="4"/><polyline points="894.6,594.0 894.6,630.0" fill="none" stroke="#eceee4" stroke-width="4"/><polyline points="800.0,594.0 802.0,612.0 822.0,632.0" fill="none" stroke="#eceee4" stroke-width="3.4"/><polyline points="971.0,594.0 969.0,612.0 949.0,632.0" fill="none" stroke="#eceee4" stroke-width="3.4"/><polyline points="784.0,613.0 802.0,613.0" fill="none" stroke="#eceee4" stroke-width="2.2"/><polyline points="969.0,613.0 987.0,613.0" fill="none" stroke="#eceee4" stroke-width="2.2"/><polyline points="913.8,594.0 913.8,602.0" fill="none" stroke="#eceee4" stroke-width="2.6"/><polyline points="927.6,594.0 927.6,604.0" fill="none" stroke="#eceee4" stroke-width="2.2"/><circle cx="792.5" cy="603" r="8.6" fill="#eceee4"/><circle cx="792.5" cy="603" r="7.2" fill="#d3e4b4"/><circle cx="978.4" cy="603" r="8.6" fill="#eceee4"/><circle cx="978.4" cy="603" r="7.2" fill="#d3e4b4"/><rect x="790.4" y="601.8" width="4.6" height="2.4" fill="#ecc6c0" transform="rotate(-32 792.6 603)"/><circle cx="978.4" cy="603" r="2.6" fill="#ecc6c0"/><rect x="915" y="599.6" width="11.6" height="4.4" fill="#dfded2"/><polyline points="886.0,60.0 886.0,581.0" fill="none" stroke="#ffffff" stroke-width="4"/><polyline points="945.4,88.0 945.4,222.0" fill="none" stroke="#ffffff" stroke-width="3.7"/><polyline points="967.0,223.0 967.0,342.0" fill="none" stroke="#ffffff" stroke-width="4"/><polyline points="1043.8,60.0 1039.9,470.0 1040.6,494.0 1003.4,582.0" fill="none" stroke="#ffffff" stroke-width="3.9"/><polyline points="1250.0,100.0 1250.4,629.0" fill="none" stroke="#ffffff" stroke-width="7"/><polyline points="1117.0,340.0 1117.0,629.0" fill="none" stroke="#ffffff" stroke-width="4.3"/><polyline points="742.0,222.7 1277.0,222.7" fill="none" stroke="#ffffff" stroke-width="3.7"/><polyline points="742.0,468.2 1277.0,469.5" fill="none" stroke="#ffffff" stroke-width="3.7"/><polyline points="742.0,584.0 1277.0,584.0" fill="none" stroke="#ffffff" stroke-width="6.6"/><polyline points="1119.0,526.7 1247.0,526.7" fill="none" stroke="#ffffff" stroke-width="4"/><polyline points="1253.0,158.3 1277.0,158.3" fill="none" stroke="#ffffff" stroke-width="3.8"/><polyline points="888.0,85.2 942.0,85.2 945.4,88.4 945.4,95.0" fill="none" stroke="#ffffff" stroke-width="3.6"/><polyline points="888.0,128.8 946.0,128.8" fill="none" stroke="#ffffff" stroke-width="3.2"/><polyline points="1045.0,125.6 1120.5,125.6 1188.5,152.6" fill="none" stroke="#ffffff" stroke-width="3.6"/><polyline points="1137.0,284.8 1182.7,286.6 1193.0,289.8 1247.5,286.4" fill="none" stroke="#ffffff" stroke-width="3.6"/><polyline points="886.0,533.0 839.5,533.6" fill="none" stroke="#ffffff" stroke-width="1.3"/><polyline points="868.9,533.4 868.9,567.0 886.0,568.9" fill="none" stroke="#ffffff" stroke-width="1.3"/><polygon points="742.0,331.8 836.0,331.8 841.5,340.6 742.0,340.6" fill="#ffffff"/><polyline points="742.0,344.8 1277.0,344.8" fill="none" stroke="#ffffff" stroke-width="7.2"/><polyline points="1119.0,335.4 1277.0,335.4" fill="none" stroke="#ffffff" stroke-width="7.2"/><polyline points="742.0,354.3 1040.0,355.5" fill="none" stroke="#ffffff" stroke-width="2.3"/><polyline points="1118.0,360.6 1247.0,360.6" fill="none" stroke="#ffffff" stroke-width="2.1"/><polyline points="843.0,337.0 1040.0,337.0" fill="none" stroke="#ffffff" stroke-width="1.2"/><polyline points="1232.5,60.0 1217.5,99.4 1117.4,323.0 1116.8,346.0" fill="none" stroke="#ffffff" stroke-width="7.2"/><polyline points="1230.0,60.0 1236.0,76.0 1250.0,102.0" fill="none" stroke="#ffffff" stroke-width="7"/><polyline points="1264.0,60.0 1247.0,90.0 1236.0,97.4 1224.0,101.0 1214.6,106.0" fill="none" stroke="#ffffff" stroke-width="7"/><polyline points="736.3,490.2 770.8,582.0" fill="none" stroke="#ffffff" stroke-width="4.4"/><text x="883" y="338.6" font-size="7.4" fill="#858585" text-anchor="middle" stroke="#f2f2ed" stroke-width="1.1" paint-order="stroke" textLength="31" lengthAdjust="spacing">K St NW</text><text x="1012" y="338.6" font-size="7.4" fill="#858585" text-anchor="middle" stroke="#f2f2ed" stroke-width="1.1" paint-order="stroke" textLength="31" lengthAdjust="spacing">K St NW</text><text x="830" y="357.8" font-size="7.4" fill="#858585" text-anchor="middle" stroke="#f2f2ed" stroke-width="1.1" paint-order="stroke" textLength="31" lengthAdjust="spacing">K St NW</text><text x="975" y="358.2" font-size="7.4" fill="#858585" text-anchor="middle" stroke="#f2f2ed" stroke-width="1.1" paint-order="stroke" textLength="31" lengthAdjust="spacing">K St NW</text><text x="1090" y="348.4" font-size="7.4" fill="#858585" text-anchor="middle" stroke="#f2f2ed" stroke-width="1.1" paint-order="stroke" textLength="31" lengthAdjust="spacing">K St NW</text><text x="1183.8" y="363" font-size="7.4" fill="#858585" text-anchor="middle" stroke="#f2f2ed" stroke-width="1.1" paint-order="stroke" textLength="31" lengthAdjust="spacing">K St NW</text><text x="1272.6" y="338.6" font-size="7.4" fill="#858585" text-anchor="middle" stroke="#f2f2ed" stroke-width="1.1" paint-order="stroke" letter-spacing="0.3">K</text><text x="1136.6" y="225" font-size="7.4" fill="#858585" text-anchor="middle" stroke="#f2f2ed" stroke-width="1.1" paint-order="stroke" textLength="29.4" lengthAdjust="spacing">L St NW</text><text x="888.6" y="272" font-size="7.4" fill="#858585" text-anchor="middle" transform="rotate(-90 888.6 272)" stroke="#f2f2ed" stroke-width="1.1" paint-order="stroke" textLength="42.4" lengthAdjust="spacing">16th St NW</text><text x="1046.2" y="124" font-size="7.4" fill="#858585" text-anchor="middle" transform="rotate(-90 1046.2 124)" stroke="#f2f2ed" stroke-width="1.1" paint-order="stroke" textLength="42.4" lengthAdjust="spacing">15th St NW</text><text x="1246.8" y="132.6" font-size="7.4" fill="#858585" text-anchor="middle" transform="rotate(85 1246.8 132.6)" stroke="#f2f2ed" stroke-width="1.1" paint-order="stroke" textLength="48.5" lengthAdjust="spacing">14th St NW</text><text x="1203.2" y="136.8" font-size="7.4" fill="#858585" text-anchor="middle" transform="rotate(-64.7 1203.2 136.8)" stroke="#f2f2ed" stroke-width="1.1" paint-order="stroke" textLength="72" lengthAdjust="spacing">Vermont Ave NW</text><text x="1252.8" y="428.8" font-size="7.4" fill="#858585" text-anchor="middle" transform="rotate(-90 1252.8 428.8)" stroke="#f2f2ed" stroke-width="1.1" paint-order="stroke" textLength="47" lengthAdjust="spacing">14th St NW</text><text x="1119" y="501.8" font-size="7.4" fill="#858585" text-anchor="middle" transform="rotate(-90 1119 501.8)" stroke="#f2f2ed" stroke-width="1.1" paint-order="stroke" textLength="43" lengthAdjust="spacing">15th St NW</text><text x="888.2" y="469" font-size="7.4" fill="#858585" text-anchor="middle" transform="rotate(-90 888.2 469)" stroke="#f2f2ed" stroke-width="1.1" paint-order="stroke" textLength="113" lengthAdjust="spacing">Black Lives Matter Plaza NW</text><text x="752" y="541" font-size="7.4" fill="#858585" text-anchor="middle" transform="rotate(69.4 752 541)" stroke="#f2f2ed" stroke-width="1.1" paint-order="stroke" textLength="56" lengthAdjust="spacing">cticut Ave NW</text><text x="1079.5" y="406.4" font-size="7.4" fill="#74ad72" text-anchor="middle" stroke="#f2f2ed" stroke-width="1.1" paint-order="stroke" textLength="33" lengthAdjust="spacing">McPherson</text><text x="1079.5" y="415.4" font-size="7.4" fill="#74ad72" text-anchor="middle" stroke="#f2f2ed" stroke-width="1.1" paint-order="stroke" textLength="23.6" lengthAdjust="spacing">Square</text><text x="762" y="438.6" font-size="7.8" fill="#6c6c6c" text-anchor="middle" stroke="#f2f2ed" stroke-width="1.1" paint-order="stroke" textLength="38.5" lengthAdjust="spacing">Army And</text><text x="762.6" y="447.8" font-size="7.8" fill="#6c6c6c" text-anchor="middle" stroke="#f2f2ed" stroke-width="1.1" paint-order="stroke" textLength="40.5" lengthAdjust="spacing">Navy Club</text><text x="1020" y="484.8" font-size="7.8" fill="#6c6c6c" text-anchor="middle" stroke="#f2f2ed" stroke-width="1.1" paint-order="stroke" textLength="54.7" lengthAdjust="spacing">McPherson Sq</text><text x="1020" y="494" font-size="7.8" fill="#6c6c6c" text-anchor="middle" stroke="#f2f2ed" stroke-width="1.1" paint-order="stroke" textLength="53.6" lengthAdjust="spacing">Metro Station</text><text x="1236.6" y="513.4" font-size="7.8" fill="#6c6c6c" text-anchor="middle" stroke="#f2f2ed" stroke-width="1.1" paint-order="stroke" textLength="54.7" lengthAdjust="spacing">McPherson Sq</text><text x="1236.6" y="522.6" font-size="7.8" fill="#6c6c6c" text-anchor="middle" stroke="#f2f2ed" stroke-width="1.1" paint-order="stroke" textLength="53.6" lengthAdjust="spacing">Metro Station</text><text x="980.6" y="520.4" font-size="7.8" fill="#6c6c6c" text-anchor="middle" stroke="#f2f2ed" stroke-width="1.1" paint-order="stroke" textLength="58.5" lengthAdjust="spacing">Department of</text><text x="980" y="529.6" font-size="7.8" fill="#6c6c6c" text-anchor="middle" stroke="#f2f2ed" stroke-width="1.1" paint-order="stroke" textLength="37" lengthAdjust="spacing">Veterans'</text><text x="980" y="538.8" font-size="7.8" fill="#6c6c6c" text-anchor="middle" stroke="#f2f2ed" stroke-width="1.1" paint-order="stroke" textLength="26.6" lengthAdjust="spacing">Affairs</text><text x="806.6" y="549.4" font-size="7.8" fill="#6c6c6c" text-anchor="middle" stroke="#f2f2ed" stroke-width="1.1" paint-order="stroke" textLength="53.6" lengthAdjust="spacing">U.S. Chamber</text><text x="806.6" y="558.6" font-size="7.8" fill="#6c6c6c" text-anchor="middle" stroke="#f2f2ed" stroke-width="1.1" paint-order="stroke" textLength="52.6" lengthAdjust="spacing">of Commerce</text><text x="1141" y="586.6" font-size="7.4" fill="#9a9a9a" text-anchor="middle" stroke="#f2f2ed" stroke-width="1.1" paint-order="stroke" textLength="31" lengthAdjust="spacing">H St NW</text><path d="M1124.8 340.3L1126.6 338.1Q1128 339.6 1129.4 339.6Q1131 339.4 1132.4 337.6Q1133.8 339.4 1135.4 339.6Q1137 339.6 1138.4 338.1L1140.8 340.6Q1139 342.4 1139.1 344.2Q1139.4 345.8 1140.6 347L1140 349.3L1132.4 350.9L1125 349.3L1124.4 347Q1125.4 345.8 1125.5 344.2Q1125.4 342.4 1124.8 340.3Z" fill="#fff" stroke="#1c1c1c" stroke-width="0.75" stroke-linejoin="round"/><text x="1132.80" y="347.60" font-size="6.6" fill="#8c8c8c" text-anchor="middle" font-weight="bold">29</text><defs><radialGradient id="pg" cx="0.48" cy="0.45" r="0.55"><stop offset="0" stop-color="#ffb060"/><stop offset="0.35" stop-color="#f88030"/><stop offset="0.7" stop-color="#e4501c"/><stop offset="1" stop-color="#d84820"/></radialGradient></defs><circle cx="1042.9" cy="344.6" r="3.1" fill="url(#pg)"/><circle cx="1062.6" cy="345.6" r="3.1" fill="url(#pg)"/><circle cx="1090.6" cy="344.9" r="3.1" fill="url(#pg)"/><circle cx="1115.1" cy="345.5" r="3.1" fill="url(#pg)"/><circle cx="1116.6" cy="366" r="3.1" fill="url(#pg)"/><circle cx="1116.6" cy="399" r="3.1" fill="url(#pg)"/><circle cx="1117.5" cy="419" r="3.1" fill="url(#pg)"/><circle cx="1117.5" cy="444" r="3.1" fill="url(#pg)"/><circle cx="1117" cy="466.8" r="3.1" fill="url(#pg)"/><text x="1036.40" y="551.90" font-size="8.6" fill="#2e2e2e" textLength="224.40" lengthAdjust="spacingAndGlyphs">Esri Community Maps Contributors, DCGIS, M-NCPPC, VITA,</text><text x="1013.70" y="563.26" font-size="8.6" fill="#2e2e2e" textLength="247.10" lengthAdjust="spacingAndGlyphs">BuildingFootprintUSA, Esri, HERE, Garmin, SafeGraph, INCREMENT</text><text x="1010.40" y="574.62" font-size="8.6" fill="#2e2e2e" textLength="250.40" lengthAdjust="spacingAndGlyphs">P, METI/NASA, USGS, EPA, NPS, US Census Bureau, USDA, Sources:</text><text x="1006.40" y="585.98" font-size="8.6" fill="#2e2e2e" textLength="254.40" lengthAdjust="spacingAndGlyphs">Esri, Airbus DS, USGS, NGA, NASA, CGIAR, N Robinson, NCEAS, NLS,</text><text x="1013.00" y="597.34" font-size="8.6" fill="#2e2e2e" textLength="247.80" lengthAdjust="spacingAndGlyphs">OS, NMA, Geodatastyrelsen, Rijkswaterstaat, GSA, Geoland, FEMA,</text><text x="1118.00" y="608.70" font-size="8.6" fill="#2e2e2e" textLength="142.80" lengthAdjust="spacingAndGlyphs">Intermap and the GIS user community</text></g><path d="M741.9 40V629.55H1277.65V40" fill="none" stroke="#000" stroke-width="1.6"/><defs><radialGradient id="pg2" cx="0.48" cy="0.45" r="0.55"><stop offset="0" stop-color="#ffb060"/><stop offset="0.35" stop-color="#f88030"/><stop offset="0.7" stop-color="#e4501c"/><stop offset="1" stop-color="#d84820"/></radialGradient></defs><circle cx="754.4" cy="650.2" r="3.3" fill="url(#pg2)"/><text x="773.00" y="653.70" font-size="10.4" fill="#111" textLength="70.80" lengthAdjust="spacingAndGlyphs">Testing_display</text><path d="M742 669.6H766.6" stroke="#bf7fd6" stroke-width="1.1"/><text x="773.00" y="673.70" font-size="10.4" fill="#111" textLength="44.50" lengthAdjust="spacingAndGlyphs">Line layer</text></g></svg>
<!-- p_right -->
<span class="t" style="left:1466.40px;top:22.00px;font-size:20.4px;color:#a6a6a6;transform:scaleX(0.9696);">Symbology - Points</span>
<svg style="left:1853px;top:29px" width="10" height="5.4" viewBox="0 0 10 5.4"><path d="M0 0H10L5.0 5.4Z" fill="#a8a8a8"/></svg>
<svg style="left:1873px;top:22.6px" width="10" height="13" viewBox="0 0 10 13"><path d="M2.6 0.6H7.2V7.4H2.6Z" fill="none" stroke="#b4b4b4" stroke-width="1.2"/><path d="M5.8 0.6H7.2V7.4H5.8Z" fill="#b4b4b4"/><path d="M0 7.2H9.4V8.7H0Z" fill="#b4b4b4"/><path d="M4.2 8.7H5.4V12.6H4.2Z" fill="#b4b4b4"/></svg>
<svg style="left:1893px;top:24px" width="10" height="10" viewBox="0 0 10 10"><path d="M0.4 0.4L9.6 9.6M9.6 0.4L0.4 9.6" stroke="#c8c8c8" stroke-width="1.5" fill="none"/></svg>
<svg style="left:1477px;top:64px" width="31" height="32" viewBox="0 0 31 32"><path d="M4.6 3.6Q10 4.6 14.6 2.4Q20 1.4 25.4 2.6L29.6 27Q24 24.6 19 25.4Q12 27.6 6.6 26.4Q3 26 0.6 26.6Z" fill="#c8ae2a" stroke="#a89020" stroke-width="0.6"/><path d="M7.6 27.2L22.6 14.4" stroke="#8a8a8a" stroke-width="4.2" stroke-linecap="round"/><path d="M8.4 26.2L22.2 14.6" stroke="#d0d0d0" stroke-width="1.6" stroke-linecap="round"/><path d="M8.6 24.8Q5.4 25 3.4 29.6Q2.8 31 2 31.4Q6.6 32.4 9.4 29.4Q10.6 27.6 8.6 24.8Z" fill="#c87a28"/></svg>
<svg style="left:1517px;top:64px" width="32" height="33" viewBox="0 0 32 33"><rect x="0.6" y="1.4" width="20" height="20" fill="#2a8c2e" stroke="#4fbf55" stroke-width="1.1"/><rect x="2.6" y="3.4" width="16" height="16" fill="none" stroke="#278428" stroke-width="1"/><rect x="11.4" y="11.6" width="15.6" height="15.6" transform="rotate(30 19.2 19.4)" fill="#27702a" fill-opacity="0.85" stroke="#4fbf55" stroke-width="1.1"/><rect x="13.2" y="13.4" width="12" height="12" transform="rotate(30 19.2 19.4)" fill="none" stroke="#2f8832" stroke-width="0.8"/></svg>
<svg style="left:1558px;top:65px" width="28" height="29" viewBox="0 0 28 29"><path d="M5.6 0.6V12M9.4 0.6V12M18.4 0.6V9M22.6 0.6V9" stroke="#a8a8a8" stroke-width="1.1" fill="none"/><path d="M5.6 13V28M9.4 13V28M0 19.6H5.6M0 23.6H5.6" stroke="#a8a8a8" stroke-width="1.1" fill="none"/><path d="M22.6 13Q22.6 23.6 13 23.6H9.4M18.4 13Q18.4 19.6 12.6 19.6H9.4" stroke="#a8a8a8" stroke-width="1.1" fill="none"/><rect x="0" y="6.8" width="27.6" height="5.6" fill="#1e64a0"/><path d="M0 13H27.6" stroke="#c8c8c8" stroke-width="0.9"/></svg>
<svg style="left:1598px;top:65px" width="27" height="29" viewBox="0 0 27 29"><path d="M0.8 0.6H25.8V3.4L15.4 13.6L14.6 28.4H12L11.2 13.6L0.8 3.4Z" fill="#6e6e6e" stroke="#a4a4a4" stroke-width="1"/><path d="M2.6 3.2H24L14 12.8H12.6Z" fill="#4e4e4e"/></svg>
<svg style="left:1637px;top:65px" width="31" height="29" viewBox="0 0 31 29"><path d="M6 14.4L20 1.4" stroke="#8a8a8a" stroke-width="2.6" stroke-linecap="round"/><path d="M6.4 13.6L19.6 1.6" stroke="#c8c8c8" stroke-width="0.9"/><path d="M5.6 12.6Q3 13 1.8 16Q1 17.4 0.2 17.6Q3.4 18.8 5.8 16.8Q7.4 15 5.6 12.6Z" fill="#c87a28"/><path d="M11.4 11.4L16.4 16H29.6V28.2H11.4Z" fill="#333" stroke="#a8a8a8" stroke-width="1.2"/><rect x="14.6" y="18.6" width="2.8" height="2.8" fill="#8a6ccc"/><rect x="14.6" y="23.4" width="2.8" height="2.8" fill="#8a6ccc"/><path d="M19 20H26.6M19 24.8H26.6" stroke="#9a9a9a" stroke-width="1.3"/></svg>
<div class="a" style="left:1472px;top:103px;width:40px;height:4px;background:#1f8ef0;"></div>
<div class="a" style="left:1512px;top:105px;width:160px;height:2px;background:#6a6a6a;"></div>
<div class="a" style="left:1881px;top:75.4px;width:18px;height:4.2px;background:#a8a8a8;border-radius:2px;"></div>
<div class="a" style="left:1881px;top:81.4px;width:18px;height:4.2px;background:#a8a8a8;border-radius:2px;"></div>
<div class="a" style="left:1881px;top:87.4px;width:18px;height:4.2px;background:#a8a8a8;border-radius:2px;"></div>
<span class="t" style="left:1468.40px;top:121.80px;font-size:17.6px;color:#ececec;font-weight:bold;transform:scaleX(0.9832);">Primary symbology</span>
<div class="a" style="left:1468px;top:149.4px;width:435.4px;height:27.2px;background:#232323;border:1px solid #424242;"></div>
<span class="t" style="left:1472.40px;top:154.80px;font-size:15.5px;color:#f0f0f0;transform:scaleX(0.9507);">Single Symbol</span>
<svg style="left:1891.6px;top:161.4px" width="6.4" height="3.6" viewBox="0 0 6.4 3.6"><path d="M0 0H6.4L3.2 3.6Z" fill="#a8a8a8"/></svg>
<span class="t" style="left:1468.40px;top:194.80px;font-size:15.5px;color:#e6e6e6;transform:scaleX(0.9480);">Symbol</span>
<svg style="left:1585.8px;top:197.2px" width="10.8" height="10.8" viewBox="0 0 10.8 10.8"><defs><radialGradient id="dr" cx="0.42" cy="0.4" r="0.62"><stop offset="0" stop-color="#ffd9a8"/><stop offset="0.3" stop-color="#ff8a3a"/><stop offset="0.75" stop-color="#ea4510"/><stop offset="1" stop-color="#c83a10"/></radialGradient></defs><circle cx="5.4" cy="5.4" r="4.4" fill="url(#dr)"/></svg>
<span class="t" style="left:1468.40px;top:241.80px;font-size:15.5px;color:#e6e6e6;transform:scaleX(0.9334);">Label</span>
<div class="a" style="left:1567px;top:235px;width:337px;height:31px;background:#252525;border:1px solid #474747;"></div>
<span class="t" style="left:1574.40px;top:242.60px;font-size:13.4px;color:#ececec;transform:scaleX(0.9888);">Testing_display</span>
<span class="t" style="left:1468.40px;top:301.00px;font-size:15.5px;color:#e6e6e6;transform:scaleX(0.9725);">Description</span>
<div class="a" style="left:1567px;top:277px;width:337px;height:62.6px;background:#252525;border:1px solid #474747;"></div>
<span class="t" style="left:1466.00px;top:816.80px;font-size:15.5px;color:#e8e8e8;transform:scaleX(0.9103);">Catal...</span>
<span class="t" style="left:1534.30px;top:816.80px;font-size:15.5px;color:#e8e8e8;transform:scaleX(0.9868);">Modi...</span>
<span class="t" style="left:1599.20px;top:816.80px;font-size:15.5px;color:#2b9ae8;transform:scaleX(0.9022);">Symb...</span>
<span class="t" style="left:1664.20px;top:816.80px;font-size:15.5px;color:#e8e8e8;transform:scaleX(0.9704);">History</span>
<span class="t" style="left:1726.70px;top:816.80px;font-size:15.5px;color:#e8e8e8;transform:scaleX(0.9382);">Down...</span>
<span class="t" style="left:1791.40px;top:816.80px;font-size:15.5px;color:#e8e8e8;transform:scaleX(0.9112);">Mana...</span>
<span class="t" style="left:1856.60px;top:816.80px;font-size:15.5px;color:#e8e8e8;transform:scaleX(0.8956);">Elem...</span>
</body></html>
